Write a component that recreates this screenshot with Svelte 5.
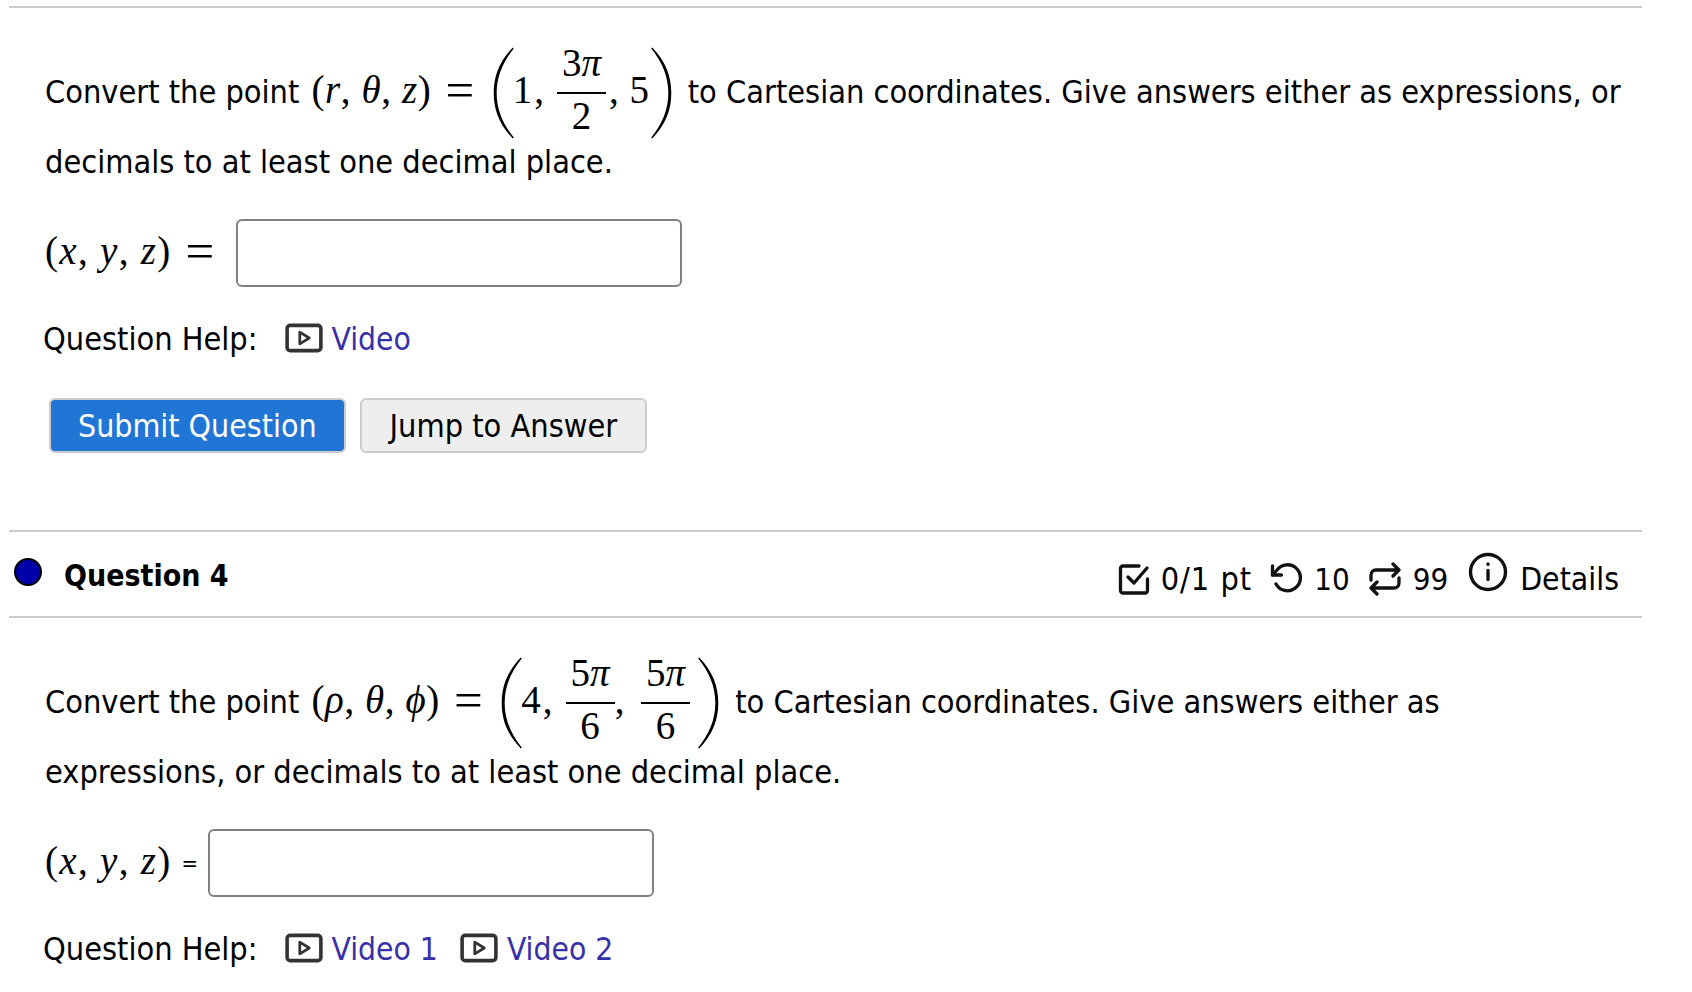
{#snippet play()}
    <svg class="play" viewBox="0 0 36 28" fill="none" stroke="#333" stroke-width="3.400">
        <rect x="2" y="2" width="32" height="24" rx="3" />
        <path d="M14 8.500l9 5.500-9 5.500z" stroke-width="2.600" stroke-linejoin="round" />
    </svg>
{/snippet}

{#snippet bigParen(flip)}
    <svg class="paren" class:flip viewBox="0 0 22 94" fill="#000">
        <path d="M20 .5C6 15 .5 30 .5 47S6 79 20 93.500l1-1C10 79 3.500 64 3.500 47S10 15 21 1.500z" />
    </svg>
{/snippet}

{#snippet frac(top, bottom)}
    <span class="frac"><span class="num">{top}<i>π</i></span><span class="den">{bottom}</span></span>
{/snippet}

<main class="page">
    <section class="body first">
        <p class="prompt">
            Convert the point
            <span class="math"><span class="tex">(<i>r</i>, <i>θ</i>, <i>z</i>)<span class="rel">=</span></span>{@render bigParen(false)}<span class="tex inner">1,</span>{@render frac('3', '2')}<span class="tex tail">, 5</span>{@render bigParen(true)}</span>
            to Cartesian coordinates. Give answers either as expressions, or decimals to at least one decimal place.
        </p>
        <div class="answer">
            <span class="tex solo">(<i>x</i>, <i>y</i>, <i>z</i>)<span class="rel last">=</span></span>
            <input class="box" type="text" aria-label="answer" />
        </div>
        <div class="help">
            <span class="help-label">Question Help:</span>
            <a href="#v">{@render play()}Video</a>
        </div>
        <div class="actions">
            <button class="submit">Submit Question</button>
            <button class="jump">Jump to Answer</button>
        </div>
    </section>

    <header class="head">
        <span class="dot"></span>
        <h2>Question 4</h2>
        <div class="meta">
            <svg class="ico" viewBox="0 0 32 32" fill="none" stroke="#111" stroke-width="3.300" stroke-linecap="round" stroke-linejoin="round">
                <path d="M21 3H5a2.500 2.500 0 0 0-2.500 2.500v22A2.500 2.500 0 0 0 5 30h22a2.500 2.500 0 0 0 2.500-2.500V16" />
                <path d="M10 14l6 6L29 5" />
            </svg>
            <span class="pts">0/1 pt</span>
            <svg class="ico" viewBox="0 0 32 32" fill="none" stroke="#111" stroke-width="3.300" stroke-linecap="round" stroke-linejoin="round">
                <path d="M6 21a13 13 0 1 0 1-14L2.500 12" />
                <path d="M2.500 3v9h9" />
            </svg>
            <span class="tries">10</span>
            <svg class="ico wide" viewBox="0 0 34 34" fill="none" stroke="#111" stroke-width="3.300" stroke-linecap="round" stroke-linejoin="round">
                <path d="M3 18v-5a5 5 0 0 1 5-5h23M25 2l6 6-6 6" />
                <path d="M31 16v5a5 5 0 0 1-5 5H3M9 20l-6 6 6 6" />
            </svg>
            <span class="versions">99</span>
            <svg class="info" viewBox="0 0 40 40" fill="none" stroke="#111" stroke-width="3.400" stroke-linecap="round">
                <circle cx="20" cy="20" r="17.500" />
                <path d="M20 18.500v9M20 12v.4" />
            </svg>
            <span class="details">Details</span>
        </div>
    </header>

    <section class="body second">
        <p class="prompt">
            Convert the point
            <span class="math"><span class="tex">(<i>ρ</i>, <i>θ</i>, <i>ϕ</i>)<span class="rel">=</span></span>{@render bigParen(false)}<span class="tex inner">4,</span>{@render frac('5', '6')}<span class="tex mid">,</span>{@render frac('5', '6')}{@render bigParen(true)}</span>
            to Cartesian coordinates. Give answers either as<br />expressions, or decimals to at least one decimal place.
        </p>
        <div class="answer tight">
            <span class="tex solo">(<i>x</i>, <i>y</i>, <i>z</i>)</span>
            <span class="eq">=</span>
            <input class="box" type="text" aria-label="answer" />
        </div>
        <div class="help">
            <span class="help-label">Question Help:</span>
            <a href="#v1">{@render play()}Video 1</a>
            <a href="#v2">{@render play()}Video 2</a>
        </div>
    </section>
</main>

<style>
    :global(body) {
        background: #fff;
        overflow: hidden;
    }

    .page {
        width: 1633px;
        margin-left: 9px;
        color: #000;
        font-family: 'DejaVu Sans', sans-serif;
        font-stretch: condensed;
        font-size: 32.200px;
        height: 992px;
        overflow: hidden;
    }

    .body {
        padding-left: 36px;
    }

    .first {
        margin-top: 6px;
        border-top: 2px solid #ccc;
        padding-top: 39px;
        padding-bottom: 77px;
    }

    .second {
        padding-top: 39px;
    }

    .prompt {
        margin: 0;
        width: 1590px;
        line-height: 45px;
    }

    .math {
        display: inline-flex;
        align-items: center;
        vertical-align: middle;
        margin: 0 7px -4px 3px;
        transform: translateY(-3px);
    }

    .tex {
        font-family: 'Liberation Serif', serif;
        font-size: 39px;
        line-height: 46px;
        font-stretch: normal;
        letter-spacing: 0.600px;
        white-space: pre;
        margin-bottom: 5px;
    }

    .tex.solo {
        letter-spacing: 1.300px;
    }

    .inner {
        letter-spacing: 2px;
        margin-left: -2px;
    }

    .tail {
        letter-spacing: 0.500px;
        margin: 0 0 5px 3px;
    }

    .mid {
        margin-right: 5px;
    }

    .second .math > .frac:last-of-type {
        margin-right: 7px;
    }

    .rel {
        font-size: 51px;
        line-height: 40px;
        margin: 0 18px 0 14px;
        vertical-align: -4px;
    }

    .rel.last {
        margin-right: 0;
    }

    .paren {
        width: 22px;
        height: 92px;
    }

    .paren.flip {
        transform: scaleX(-1);
    }

    .frac {
        display: inline-flex;
        flex-direction: column;
        align-items: center;
        margin-left: 11px;
        font-family: 'Liberation Serif', serif;
        font-stretch: normal;
        font-size: 39px;
        line-height: 38px;
    }

    .num {
        border-bottom: 2px solid #000;
        align-self: stretch;
        text-align: center;
        padding: 0 5px 10px;
    }

    .den {
        padding: 3px 0 6px;
    }

    .answer {
        display: flex;
        align-items: center;
        gap: 20px;
        margin-top: 34px;
    }

    .answer.tight {
        gap: 10px;
    }

    .eq {
        font-size: 22px;
    }

    .box {
        width: 446px;
        height: 68px;
        box-sizing: border-box;
        border: 2px solid #808080;
        border-radius: 6px;
        background: #fff;
        margin: 0;
    }

    .help {
        display: flex;
        align-items: center;
        gap: 27px;
        margin: 33px 0 0 -2px;
    }

    a {
        display: inline-flex;
        align-items: center;
        gap: 9px;
        font-size: 31.500px;
        color: #3730a9;
        text-decoration: none;
    }

    a + a {
        margin-left: -5px;
    }

    .play {
        width: 38px;
        height: 30px;
        margin-top: -3px;
    }

    .actions {
        display: flex;
        gap: 14px;
        margin: 40px 0 0 4px;
    }

    button {
        font: inherit;
        font-stretch: condensed;
        height: 55px;
        border-radius: 6px;
        padding: 0 27px;
        border: 2px solid #ccc;
    }

    .submit {
        background: #2175d4;
        color: #fff;
        font-size: 31.800px;
    }

    .jump {
        background: #eee;
        color: #000;
        padding: 0 28px;
    }

    .head {
        display: flex;
        align-items: center;
        height: 84px;
        border-top: 2px solid #ccc;
        border-bottom: 2px solid #ccc;
    }

    .dot {
        width: 24px;
        height: 24px;
        margin: -4px 0 0 5px;
        border-radius: 50%;
        background: #0000a8;
        border: 2px solid #000;
    }

    h2 {
        margin: 2px 0 0 22px;
        font-size: 30px;
        font-weight: bold;
    }

    .meta {
        margin-left: auto;
        margin-right: 23px;
        padding-top: 10px;
        display: flex;
        align-items: center;
    }

    .ico {
        width: 32px;
        height: 32px;
    }

    .ico.wide {
        width: 34px;
        height: 34px;
    }

    .info {
        width: 40px;
        height: 40px;
        margin: -14px 12px 0 20px;
    }

    .pts {
        letter-spacing: 1px;
        margin: 0 18px 0 11px;
    }

    .tries {
        font-size: 31px;
        margin: 0 18px 0 12px;
    }

    .versions {
        font-size: 31px;
        margin-left: 11px;
    }

    .details {
        font-size: 31.700px;
    }
</style>
